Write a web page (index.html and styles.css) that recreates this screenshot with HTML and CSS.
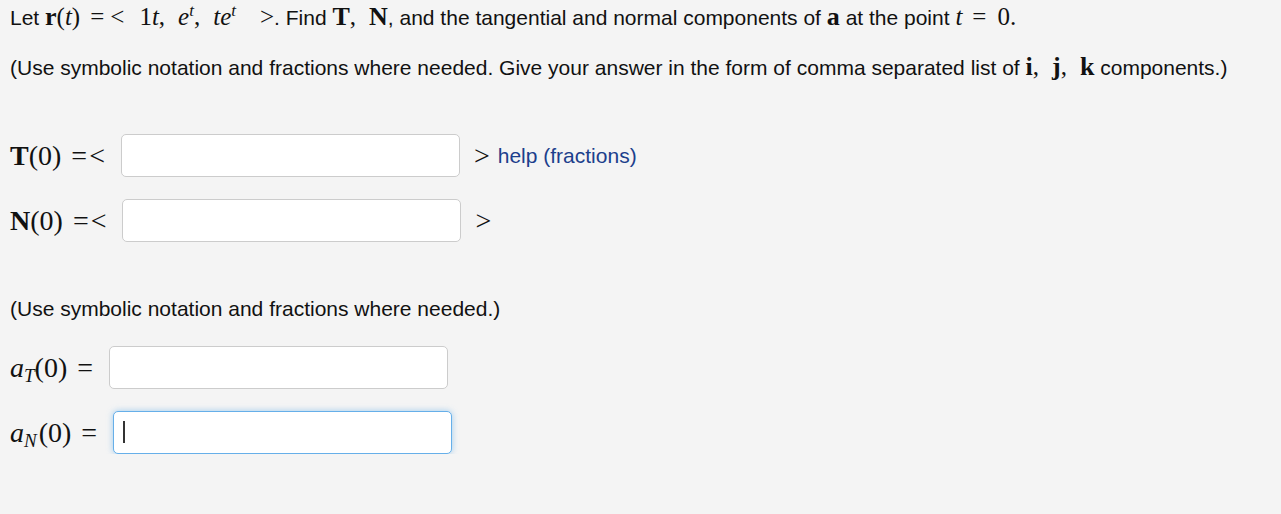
FILE: index.html
```html
<!DOCTYPE html>
<html>
<head>
<meta charset="utf-8">
<link rel="stylesheet" href="styles.css">
</head>
<body>
<div class="page">
  <p class="line first">Let <span class="m"><b>r</b>(<i>t</i>)<span class="rel eq">=</span><span class="rel lt">&lt;</span>1<i>t</i>,<span class="cs"></span><i>e</i><sup><i>t</i></sup>,<span class="cs"></span><i>te</i><sup><i>t</i></sup><span class="rel gt">&gt;</span></span>. Find <span class="m"><b>T</b>,<span class="cs"></span><b>N</b></span>, and the tangential and normal components of <span class="m"><b>a</b></span> at the point <span class="m"><i>t</i><span class="rel eq2">=</span>0.</span></p>
  <p class="line second">(Use symbolic notation and fractions where needed. Give your answer in the form of comma separated list of <span class="m"><b>i</b>,<span class="cs"></span><b>j</b>,<span class="cs"></span><b>k</b></span> components.)</p>

  <div class="row row-t">
    <span class="label ml"><b>T</b>(0)<span class="lrel">=</span><span class="lt2">&lt;</span></span>
    <input class="box" type="text">
    <span class="after ml">&gt;</span>
    <a class="help" href="#">help (fractions)</a>
  </div>
  <div class="row row-n">
    <span class="label ml"><b>N</b>(0)<span class="lrel">=</span><span class="lt2">&lt;</span></span>
    <input class="box" type="text">
    <span class="after ml">&gt;</span>
  </div>

  <p class="line third">(Use symbolic notation and fractions where needed.)</p>

  <div class="row row-at">
    <span class="label ml"><i>a</i><sub><i>T</i></sub>(0)<span class="lrel">=</span></span>
    <input class="box" type="text">
  </div>
  <div class="row row-an">
    <span class="label ml"><i>a</i><sub class="subn"><i>N</i></sub>(0)<span class="lrel">=</span></span>
    <div class="focus-wrap">
      <input class="box focused" type="text">
      <span class="caret"></span>
    </div>
  </div>
</div>
</body>
</html>
```
FILE: styles.css
```css
html, body {
  margin: 0;
  padding: 0;
  background: #f4f4f4;
}
.page {
  padding: 0 0 0 10px;
  font-family: "Liberation Sans", Arial, sans-serif;
  font-size: 21px;
  color: #111;
}
.line {
  margin: 0;
  height: 36px;
  line-height: 36px;
  white-space: nowrap;
}
.second {
  margin-top: 14px;
}
.third {
  margin-top: 49px;
}
.m {
  font-family: "Liberation Serif", "Times New Roman", serif;
  font-size: 25px;
  line-height: 1;
}
.m b {
  font-size: 26px;
  font-weight: bold;
}
.m sup, .ml sub {
  line-height: 0;
}
.m sup {
  font-size: 17px;
  vertical-align: 9px;
}
.rel {
  display: inline-block;
}
.eq {
  margin-left: 10px;
  margin-right: 6px;
}
.lt {
  margin-right: 15px;
}
.gt {
  margin-left: 24px;
}
.eq2 {
  margin-left: 10px;
  margin-right: 11px;
}
.cs {
  display: inline-block;
  width: 13px;
}
.ml {
  font-family: "Liberation Serif", "Times New Roman", serif;
  font-size: 28px;
  line-height: 1;
}
.ml b {
  font-weight: bold;
}
.ml sub {
  font-size: 19px;
  vertical-align: -5px;
}
.subn {
  margin-right: 2px;
}
.lrel {
  margin-left: 10px;
}
.lt2 {
  margin-left: 2px;
}
.row {
  display: flex;
  align-items: center;
  height: 43px;
}
.row-t {
  margin-top: 48px;
}
.row-n {
  margin-top: 22px;
}
.row-at {
  margin-top: 19px;
}
.row-an {
  margin-top: 22px;
}
.label {
  white-space: nowrap;
}
.box {
  box-sizing: border-box;
  width: 339px;
  height: 43px;
  border: 1px solid #cccccc;
  border-radius: 5px;
  background: #fff;
  margin: 0 0 0 16px;
  padding: 0 10px;
  font-size: 18px;
  outline: none;
}
.focus-wrap {
  position: relative;
  display: flex;
  margin-left: 16px;
}
.focus-wrap .box {
  margin-left: 0;
}
.focused {
  border-color: #66afe9;
  box-shadow: 0 0 6px rgba(102, 175, 233, 0.6);
}
.caret {
  position: absolute;
  left: 10px;
  top: 10px;
  width: 2px;
  height: 22px;
  background: #333;
}
.after {
  margin-left: 14px;
}
.help {
  margin-left: 8px;
  color: #1c3f8c;
  text-decoration: none;
  font-size: 21px;
}
```
